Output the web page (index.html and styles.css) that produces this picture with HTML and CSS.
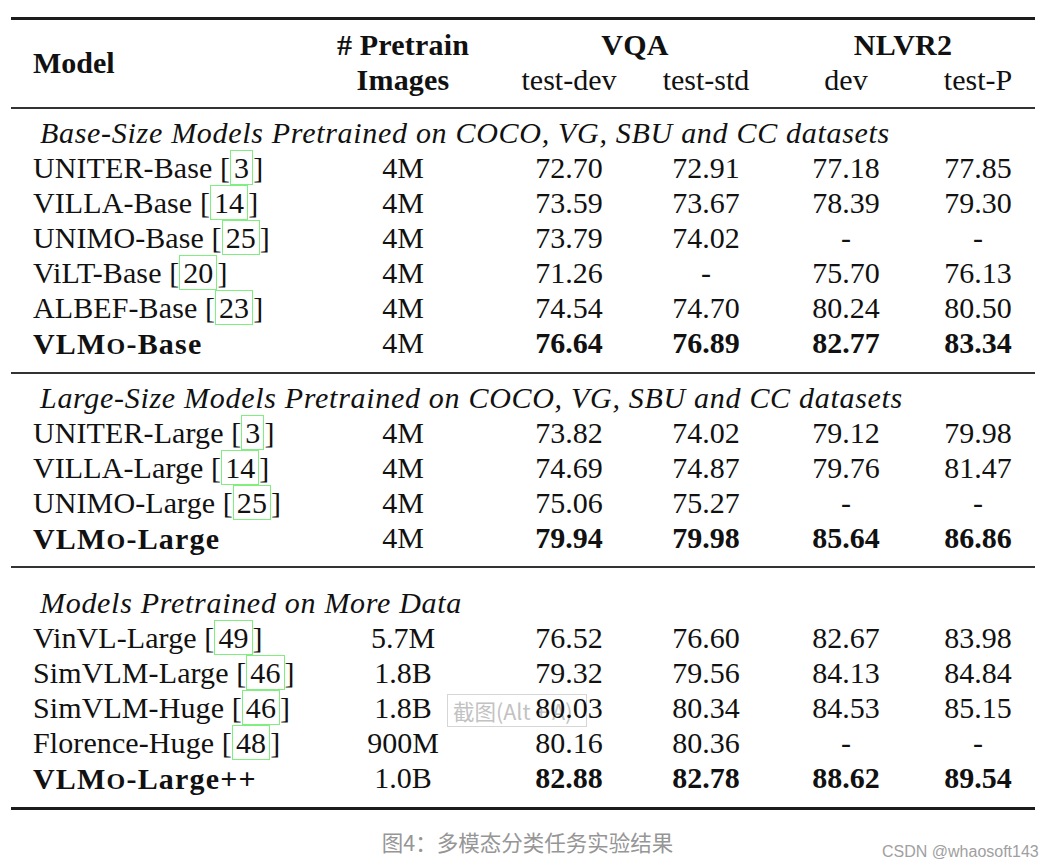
FILE: index.html
```html
<!DOCTYPE html>
<html lang="zh">
<head>
<meta charset="utf-8">
<title>VLMo results</title>
<link rel="stylesheet" href="styles.css">
</head>
<body>
<div class="page">
  <div class="tooltip">截图(Alt + A)</div>
  <div class="table">
    <div class="grid head">
      <div class="model">Model</div>
      <div class="c">#&nbsp;Pretrain</div>
      <div class="c span2 vqa">VQA</div>
      <div class="c span2 nlvr">NLVR2</div>
      <div class="c">Images</div>
      <div class="c sub">test-dev</div>
      <div class="c sub">test-std</div>
      <div class="c sub">dev</div>
      <div class="c sub">test-P</div>
    </div>

    <div class="grid section s1">
      <div class="sh">Base-Size Models Pretrained on COCO, VG, SBU and CC datasets</div>
      <div class="m">UNITER-Base [<span class="cite">3</span>]</div><div class="c">4M</div><div class="c">72.70</div><div class="c">72.91</div><div class="c">77.18</div><div class="c">77.85</div>
      <div class="m">VILLA-Base [<span class="cite">14</span>]</div><div class="c">4M</div><div class="c">73.59</div><div class="c">73.67</div><div class="c">78.39</div><div class="c">79.30</div>
      <div class="m">UNIMO-Base [<span class="cite">25</span>]</div><div class="c">4M</div><div class="c">73.79</div><div class="c">74.02</div><div class="c">-</div><div class="c">-</div>
      <div class="m">ViLT-Base [<span class="cite">20</span>]</div><div class="c">4M</div><div class="c">71.26</div><div class="c">-</div><div class="c">75.70</div><div class="c">76.13</div>
      <div class="m">ALBEF-Base [<span class="cite">23</span>]</div><div class="c">4M</div><div class="c">74.54</div><div class="c">74.70</div><div class="c">80.24</div><div class="c">80.50</div>
      <div class="m b vl">VLM<span class="sc">o</span>-Base</div><div class="c">4M</div><div class="c b">76.64</div><div class="c b">76.89</div><div class="c b">82.77</div><div class="c b">83.34</div>
    </div>

    <div class="grid section s2">
      <div class="sh">Large-Size Models Pretrained on COCO, VG, SBU and CC datasets</div>
      <div class="m">UNITER-Large [<span class="cite">3</span>]</div><div class="c">4M</div><div class="c">73.82</div><div class="c">74.02</div><div class="c">79.12</div><div class="c">79.98</div>
      <div class="m">VILLA-Large [<span class="cite">14</span>]</div><div class="c">4M</div><div class="c">74.69</div><div class="c">74.87</div><div class="c">79.76</div><div class="c">81.47</div>
      <div class="m">UNIMO-Large [<span class="cite">25</span>]</div><div class="c">4M</div><div class="c">75.06</div><div class="c">75.27</div><div class="c">-</div><div class="c">-</div>
      <div class="m b vl">VLM<span class="sc">o</span>-Large</div><div class="c">4M</div><div class="c b">79.94</div><div class="c b">79.98</div><div class="c b">85.64</div><div class="c b">86.86</div>
    </div>

    <div class="grid section s3">
      <div class="sh">Models Pretrained on More Data</div>
      <div class="m">VinVL-Large [<span class="cite">49</span>]</div><div class="c">5.7M</div><div class="c">76.52</div><div class="c">76.60</div><div class="c">82.67</div><div class="c">83.98</div>
      <div class="m">SimVLM-Large [<span class="cite">46</span>]</div><div class="c">1.8B</div><div class="c">79.32</div><div class="c">79.56</div><div class="c">84.13</div><div class="c">84.84</div>
      <div class="m">SimVLM-Huge [<span class="cite">46</span>]</div><div class="c">1.8B</div><div class="c">80.03</div><div class="c">80.34</div><div class="c">84.53</div><div class="c">85.15</div>
      <div class="m">Florence-Huge [<span class="cite">48</span>]</div><div class="c">900M</div><div class="c">80.16</div><div class="c">80.36</div><div class="c">-</div><div class="c">-</div>
      <div class="m b vl">VLM<span class="sc">o</span>-Large++</div><div class="c">1.0B</div><div class="c b">82.88</div><div class="c b">82.78</div><div class="c b">88.62</div><div class="c b">89.54</div>
    </div>
  </div>
  <div class="caption">图4：多模态分类任务实验结果</div>
  <div class="watermark">CSDN @whaosoft143</div>
</div>
</body>
</html>
```

FILE: styles.css
```css
html, body {
  margin: 0;
  padding: 0;
  background: #ffffff;
}

body {
  font-family: "Liberation Serif", "Times New Roman", serif;
  color: #111111;
}

.page {
  position: relative;
  width: 1055px;
  height: 867px;
  padding-top: 17px;
  box-sizing: border-box;
  overflow: hidden;
}

.table {
  position: relative;
  margin-left: 11px;
  width: 1024px;
  border-top: 3px solid #1c1c1c;
  border-bottom: 3px solid #1c1c1c;
  font-size: 30px;
  line-height: 35px;
}

.grid {
  display: grid;
  grid-template-columns: 309px 166px 166px 108px 172px 92px;
  grid-auto-rows: 35px;
}

.head {
  padding: 7px 0 10px;
  border-bottom: 2px solid #333333;
}

.head .model {
  grid-row: 1 / 3;
  align-self: center;
  padding-left: 22px;
  font-weight: bold;
}

.head .c {
  font-weight: bold;
  letter-spacing: 0.2px;
}

.head .c.sub {
  font-weight: normal;
  letter-spacing: 0;
}

.span2 {
  grid-column: span 2;
}

.vqa {
  padding-left: 24px;
}

.nlvr {
  padding-left: 22px;
}

.c {
  text-align: center;
  white-space: nowrap;
}

.m {
  padding-left: 22px;
  white-space: nowrap;
  letter-spacing: 0.1px;
}

.b {
  font-weight: bold;
}

.vl {
  letter-spacing: 1.2px;
}

.sc {
  font-variant: small-caps;
  font-size: 34px;
}

.sh {
  grid-column: 1 / -1;
  font-style: italic;
  padding-left: 29px;
  white-space: nowrap;
  letter-spacing: 0.7px;
}

.section + .section {
  border-top: 2px solid #333333;
}

.s1 {
  padding: 6px 0 12px;
}

.s2 {
  padding: 6px 0 11px;
}

.s3 {
  padding: 17px 0 12px;
}

.cite {
  border: 1px solid #7ff07f;
  padding: 0 3px;
}

.caption {
  margin-top: 16px;
  text-align: center;
  font-family: "Noto Sans CJK SC", "Noto Sans", sans-serif;
  font-size: 21.5px;
  line-height: 31px;
  color: #969696;
}

.watermark {
  position: absolute;
  left: 882px;
  top: 843px;
  font-family: "Liberation Sans", Arial, sans-serif;
  font-size: 16px;
  line-height: 18px;
  color: #a0a0a0;
  white-space: nowrap;
}

.tooltip {
  position: absolute;
  left: 447px;
  top: 694px;
  width: 140px;
  height: 33px;
  box-sizing: border-box;
  border: 1px solid #d6d6d6;
  padding-left: 5px;
  font-family: "Noto Sans CJK SC", "Noto Sans", sans-serif;
  font-size: 21.5px;
  line-height: 31px;
  color: #c2c2c2;
  white-space: nowrap;
}
```
